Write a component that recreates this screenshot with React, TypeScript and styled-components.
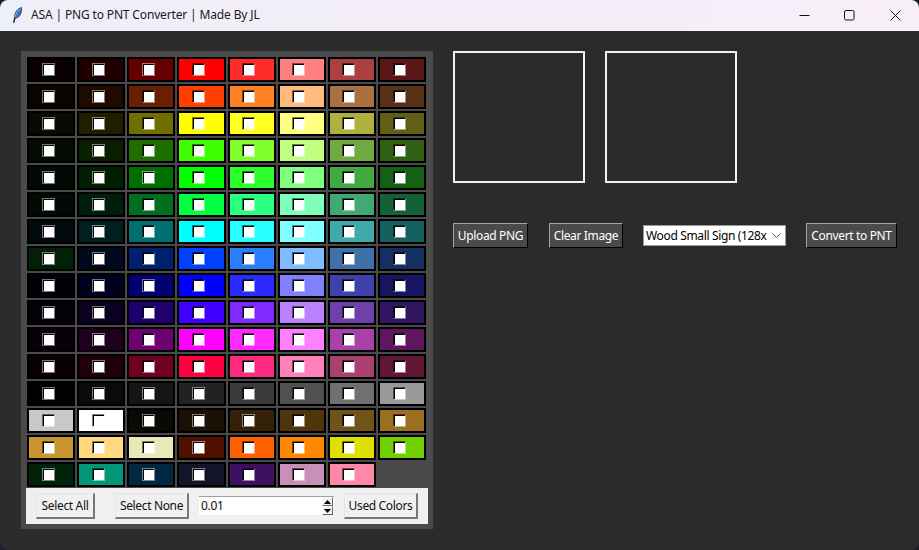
import React from "react";
import styled, { createGlobalStyle } from "styled-components";

const Global = createGlobalStyle`
  html, body { margin: 0; padding: 0; background: #1c1c2a; }
  #root { width: 919px; height: 550px; overflow: hidden; }
  * { box-sizing: border-box; }
`;

const FONT = `"Noto Sans", "Open Sans", "Liberation Sans", sans-serif`;

const Window = styled.div`
  width: 919px;
  height: 550px;
  border-radius: 8px;
  overflow: hidden;
  background: #2b2b2b;
  display: flex;
  flex-direction: column;
  font-family: ${FONT};
  font-size: 12px;
  letter-spacing: -0.35px;
`;

const TitleBar = styled.header`
  height: 31px;
  flex: none;
  display: flex;
  align-items: center;
  padding: 0 1px 1px 13px;
  background: linear-gradient(90deg, #efeff9 0%, #f4eef8 50%, #f7eef8 100%);
  color: #1a1a1a;
`;

const TitleText = styled.span`
  margin-left: 9px;
  font-size: 12px;
  line-height: 16px;
  letter-spacing: -0.15px;
  white-space: nowrap;
`;

const WindowControls = styled.div`
  margin-left: auto;
  display: flex;
  height: 100%;
`;

const WindowControl = styled.div`
  width: 45.5px;
  height: 100%;
  display: flex;
  align-items: center;
  justify-content: center;
`;

const Body = styled.main`
  flex: 1;
  display: flex;
  align-items: flex-start;
  gap: 20px;
  padding: 20px 0 0 21px;
`;

const PalettePanel = styled.section`
  width: 412px;
  height: 478px;
  background: #4a4a4a;
  padding: 6px 5px 5px;
  display: flex;
  flex-direction: column;
`;

const SwatchGrid = styled.div`
  margin-left: 1px;
  display: grid;
  grid-template-columns: repeat(8, 48.15px);
  grid-auto-rows: 25px;
  gap: 2px;
`;

const Swatch = styled.div<{ $color: string }>`
  background: ${(p) => p.$color};
  border: 2px solid #000;
  padding-right: 6px;
  display: flex;
  align-items: center;
  justify-content: center;
`;

const hex = (c: string) => [1, 3, 5].map((i) => parseInt(c.slice(i, i + 2), 16));
const toCss = (a: number[]) => `rgb(${a.map(Math.round).join(",")})`;
const lighter = (c: string) => toCss(hex(c).map((v) => v + (255 - v) * 0.45));
const darker = (c: string) => {
  const rgb = hex(c);
  if (rgb.reduce((a, b) => a + b, 0) < 120) return lighter(c);
  return toCss(rgb.map((v) => v * 0.5));
};

const CheckBox = styled.span<{ $color: string }>`
  display: block;
  width: 13px;
  height: 13px;
  background: #fff;
  border-style: solid;
  border-width: 1px;
  border-color: ${(p) => darker(p.$color)} ${(p) => lighter(p.$color)} ${(p) => lighter(p.$color)} ${(p) => darker(p.$color)};
  box-shadow: inset 1px 1px 0 #000;
`;

const BottomBar = styled.div`
  margin-top: 1px;
  height: 36px;
  background: #f0f0f0;
  display: flex;
  align-items: flex-start;
  padding: 5px 0 0 10px;
`;

const LightButton = styled.button<{ $w: number; $gap?: number }>`
  width: ${(p) => p.$w}px;
  height: 26px;
  margin-left: ${(p) => p.$gap ?? 0}px;
  padding: 0;
  background: #f0f0f0;
  color: #111;
  font: 12px ${FONT};
  letter-spacing: -0.35px;
  border-style: solid;
  border-width: 1px 2px 2px 1px;
  border-color: #e4e4e4 #777 #777 #e4e4e4;
`;

const SpinBox = styled.div`
  width: 135px;
  height: 19px;
  margin: 3px 0 0 10px;
  background: #fff;
  border-top: 1px solid #a0a0a0;
  display: flex;
  align-items: center;
  padding-left: 2px;
  color: #111;
`;

const SpinValue = styled.span`
  flex: 1;
  font-size: 12px;
  line-height: 16px;
`;

const SpinButtons = styled.div`
  width: 11px;
  height: 18px;
  margin-right: 1px;
  display: flex;
  flex-direction: column;
`;

const SpinButton = styled.div`
  flex: 1;
  background: #f0f0f0;
  border: 1px solid;
  border-color: #fff #666 #666 #fff;
  display: flex;
  align-items: center;
  justify-content: center;
`;

const RightColumn = styled.section`
  display: flex;
  flex-direction: column;
  gap: 40px;
`;

const Previews = styled.div`
  display: flex;
  gap: 20px;
`;

const Preview = styled.div`
  width: 132px;
  height: 132px;
  border: 2px solid #f0f0f0;
  background: #2b2b2b;
`;

const Controls = styled.div`
  display: flex;
  align-items: center;
`;

const DarkButton = styled.button<{ $w: number; $gap?: number }>`
  width: ${(p) => p.$w}px;
  height: 25px;
  margin-left: ${(p) => p.$gap ?? 0}px;
  padding: 0;
  background: #4a4a4a;
  color: #fff;
  font: 12px ${FONT};
  letter-spacing: -0.35px;
  border-style: solid;
  border-width: 1px;
  border-color: #a4a4a4 #000 #000 #a4a4a4;
`;

const Combo = styled.div`
  width: 143px;
  height: 21px;
  margin-left: 20px;
  background: #fff;
  border: 1px solid #9a9a9a;
  display: flex;
  align-items: center;
  padding-left: 2px;
  color: #000;
`;

const ComboText = styled.span`
  width: 122px;
  white-space: nowrap;
  line-height: 16px;
`;

const ComboArrow = styled.span`
  flex: 1;
  display: flex;
  justify-content: center;
`;

const PALETTE = [
  ["#0a0003", "#1f0000", "#660000", "#ff0000", "#ff2a2a", "#ff8080", "#aa4040", "#5a1515"],
  ["#0a0300", "#1f0a00", "#6a2000", "#ff4000", "#ff8020", "#ffbb80", "#aa7040", "#5a3015"],
  ["#0a0a00", "#1f1f00", "#6f6f00", "#ffff00", "#ffff20", "#ffff80", "#b0b040", "#5f5f15"],
  ["#030a03", "#0a1f00", "#1f6f00", "#40ff00", "#80ff2a", "#c0ff80", "#70aa40", "#306015"],
  ["#000a03", "#001f00", "#006f00", "#00ff00", "#2aff2a", "#80ff80", "#40aa40", "#156015"],
  ["#000a03", "#001f0a", "#006f20", "#00ff40", "#2aff80", "#80ffbb", "#40aa70", "#156035"],
  ["#000a0a", "#001f1f", "#006f6f", "#00ffff", "#2affff", "#80ffff", "#40aaaa", "#156060"],
  ["#002008", "#000a1f", "#00206f", "#0040ff", "#2a7fff", "#80bbff", "#4070aa", "#153060"],
  ["#00000a", "#00001f", "#00006f", "#0000ff", "#2a2aff", "#8080ff", "#4040aa", "#151560"],
  ["#03000a", "#0a001f", "#20006f", "#4000ff", "#7f2aff", "#bb80ff", "#7040aa", "#301560"],
  ["#0a000a", "#1f001f", "#6f006f", "#ff00ff", "#ff2aff", "#ff80ff", "#aa40aa", "#601560"],
  ["#0a0003", "#1f000a", "#6f0020", "#ff0040", "#ff2a80", "#ff80bb", "#aa4070", "#601535"],
  ["#000000", "#0a0a0a", "#151515", "#222222", "#3a3a3a", "#505050", "#707070", "#9a9a9a"],
  ["#c8c8c8", "#ffffff", "#0a0a05", "#1a1005", "#352008", "#4f350c", "#6f5318", "#9a7020"],
  ["#c89530", "#ffd880", "#e8e8b8", "#501000", "#ff6000", "#ff8800", "#e0e000", "#70d000"],
  ["#002208", "#009878", "#002840", "#141428", "#401060", "#c890b8", "#ff88a8"],
];

const Feather = () => (
  <svg width="9" height="16" viewBox="0 0 9 16" aria-hidden="true">
    <path d="M0.8 15.6 L1.6 9.5 C1.8 5.5 4.5 1.5 8.6 0.4 C9 4 7.8 8.5 4.8 10.6 L2.2 11.2 Z" fill="#3b74b4" stroke="#16294a" strokeWidth="0.7" />
    <path d="M1.9 10.5 C2.8 7 4.5 4 7.4 2" stroke="#a9cdf0" strokeWidth="0.8" fill="none" />
    <path d="M0.8 15.6 L1.9 10.5" stroke="#111" strokeWidth="0.9" fill="none" />
  </svg>
);

const Minimize = () => (
  <svg width="11" height="11" viewBox="0 0 11 11" aria-hidden="true">
    <path d="M0.5 5.5 H10.5" stroke="#111" strokeWidth="1" />
  </svg>
);

const Maximize = () => (
  <svg width="11" height="11" viewBox="0 0 11 11" aria-hidden="true">
    <rect x="0.5" y="0.5" width="9.5" height="9.5" rx="1.5" fill="none" stroke="#111" strokeWidth="1" />
  </svg>
);

const Close = () => (
  <svg width="11" height="11" viewBox="0 0 11 11" aria-hidden="true">
    <path d="M0.5 0.5 L10.5 10.5 M10.5 0.5 L0.5 10.5" stroke="#111" strokeWidth="1" />
  </svg>
);

const Chevron = () => (
  <svg width="9" height="5" viewBox="0 0 9 5" aria-hidden="true">
    <path d="M0.5 0.5 L4.5 4.5 L8.5 0.5" stroke="#555" strokeWidth="1" fill="none" />
  </svg>
);

const Arrow = ({ down }: { down?: boolean }) => (
  <svg width="7" height="4" viewBox="0 0 7 4" aria-hidden="true">
    <path d={down ? "M0 0 H7 L3.5 4 Z" : "M0 4 H7 L3.5 0 Z"} fill="#000" />
  </svg>
);

export default function App() {
  return (
    <Window>
      <Global />
      <TitleBar>
        <Feather />
        <TitleText>ASA | PNG to PNT Converter | Made By JL</TitleText>
        <WindowControls>
          <WindowControl><Minimize /></WindowControl>
          <WindowControl><Maximize /></WindowControl>
          <WindowControl><Close /></WindowControl>
        </WindowControls>
      </TitleBar>
      <Body>
        <PalettePanel>
          <SwatchGrid>
            {PALETTE.flat().map((color, i) => (
              <Swatch key={i} $color={color}>
                <CheckBox $color={color} />
              </Swatch>
            ))}
          </SwatchGrid>
          <BottomBar>
            <LightButton $w={59}>Select All</LightButton>
            <LightButton $w={74} $gap={20}>Select None</LightButton>
            <SpinBox>
              <SpinValue>0.01</SpinValue>
              <SpinButtons>
                <SpinButton><Arrow /></SpinButton>
                <SpinButton><Arrow down /></SpinButton>
              </SpinButtons>
            </SpinBox>
            <LightButton $w={74} $gap={10}>Used Colors</LightButton>
          </BottomBar>
        </PalettePanel>
        <RightColumn>
          <Previews>
            <Preview />
            <Preview />
          </Previews>
          <Controls>
            <DarkButton $w={75}>Upload PNG</DarkButton>
            <DarkButton $w={74} $gap={21}>Clear Image</DarkButton>
            <Combo>
              <ComboText>Wood Small Sign (128x</ComboText>
              <ComboArrow><Chevron /></ComboArrow>
            </Combo>
            <DarkButton $w={91} $gap={20}>Convert to PNT</DarkButton>
          </Controls>
        </RightColumn>
      </Body>
    </Window>
  );
}
